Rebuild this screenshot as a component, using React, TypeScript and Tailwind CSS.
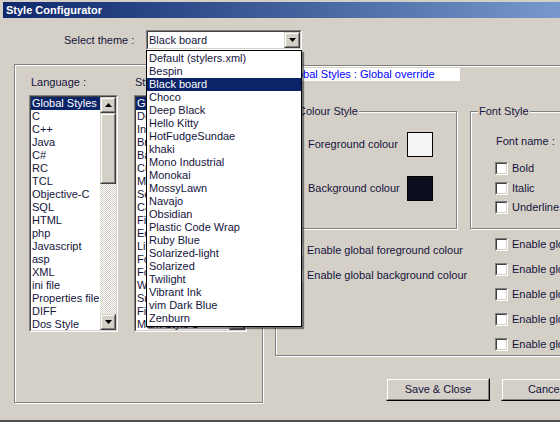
import { ReactNode } from "react";

const themes = [
  "Default (stylers.xml)",
  "Bespin",
  "Black board",
  "Choco",
  "Deep Black",
  "Hello Kitty",
  "HotFudgeSundae",
  "khaki",
  "Mono Industrial",
  "Monokai",
  "MossyLawn",
  "Navajo",
  "Obsidian",
  "Plastic Code Wrap",
  "Ruby Blue",
  "Solarized-light",
  "Solarized",
  "Twilight",
  "Vibrant Ink",
  "vim Dark Blue",
  "Zenburn",
];

const languages = [
  "Global Styles",
  "C",
  "C++",
  "Java",
  "C#",
  "RC",
  "TCL",
  "Objective-C",
  "SQL",
  "HTML",
  "php",
  "Javascript",
  "asp",
  "XML",
  "ini file",
  "Properties file",
  "DIFF",
  "Dos Style",
];

const styles = [
  "Global override",
  "Default Style",
  "Indent guideline style",
  "Brace highlight style",
  "Bad brace colour",
  "Current line background colour",
  "Mark colour",
  "Selected text colour",
  "Caret colour",
  "Find status",
  "Edge colour",
  "Line number margin",
  "Fold",
  "Fold margin",
  "White space symbol",
  "Smart HighLighting",
  "Find Mark Style",
  "Mark Style 1",
];

const globalToggles = [
  "Enable global font",
  "Enable global font size",
  "Enable global bold font style",
  "Enable global italic font style",
  "Enable global underline font style",
];

const Raised = ({ className = "", children }: { className?: string; children?: ReactNode }) => (
  <div
    className={`border border-t-[#d4d0c8] border-l-[#d4d0c8] border-r-[#404040] border-b-[#404040] ${className}`}
  >
    <div className="w-full h-full border border-t-white border-l-white border-r-[#808080] border-b-[#808080] bg-[#d4d0c8] flex items-center justify-center">
      {children}
    </div>
  </div>
);

const Arrow = ({ up }: { up?: boolean }) => (
  <svg width="7" height="4" viewBox="0 0 7 4">
    <path d={up ? "M3.5 0 L7 4 L0 4 Z" : "M0 0 L7 0 L3.5 4 Z"} fill="#000000" />
  </svg>
);

const Checkbox = () => (
  <div className="w-[13px] h-[13px] shrink-0 border border-t-[#808080] border-l-[#808080] border-r-white border-b-white">
    <div className="w-full h-full border border-t-[#404040] border-l-[#404040] border-r-[#d4d0c8] border-b-[#d4d0c8] bg-white" />
  </div>
);

const GroupBox = ({
  label,
  className = "",
  children,
}: {
  label?: string;
  className?: string;
  children?: ReactNode;
}) => (
  <div
    className={`relative border border-[#808080] shadow-[inset_1px_1px_0_#ffffff,1px_1px_0_#ffffff] ${className}`}
  >
    {label && (
      <span className="absolute -top-[7px] left-[7px] px-[1px] leading-[13px] bg-[#d4d0c8]">
        {label}
      </span>
    )}
    {children}
  </div>
);

const ListBox = ({
  items,
  width,
  thumb,
}: {
  items: string[];
  width: string;
  thumb: boolean;
}) => (
  <div
    className={`${width} h-[237px] border border-t-[#808080] border-l-[#808080] border-r-white border-b-white`}
  >
    <div className="h-full flex border border-t-[#404040] border-l-[#404040] border-r-[#d4d0c8] border-b-[#d4d0c8] bg-white overflow-hidden">
      <div className="flex-1 min-w-0 overflow-hidden">
        {items.map((item, i) => (
          <div
            key={item}
            className={`h-[13px] leading-[13px] pl-[1px] whitespace-nowrap ${
              i === 0 ? "bg-[#0a246a] text-white" : ""
            }`}
          >
            {item}
          </div>
        ))}
      </div>
      <div className="w-[16px] shrink-0 flex flex-col">
        <Raised className="w-[16px] h-[16px]">
          <Arrow up />
        </Raised>
        {thumb && <Raised className="w-[16px] h-[71px]" />}
        <div className="flex-1 bg-[repeating-conic-gradient(#ffffff_0%_25%,#d4d0c8_0%_50%)] bg-[length:2px_2px]" />
        <Raised className="w-[16px] h-[16px]">
          <Arrow />
        </Raised>
      </div>
    </div>
  </div>
);

export default function App() {
  return (
    <div className="w-[560px] h-[422px] overflow-hidden flex flex-col bg-[#d4d0c8] text-[#14143c] text-[11px] font-['Liberation_Sans',Arial,sans-serif] border-b-2 border-b-[#505050] select-none">
      <div className="mt-[2px] ml-[3px] w-[600px] h-[16px] shrink-0 flex items-center pl-[3px] bg-linear-to-r from-[#10286c] to-[#80a2d2]">
        <span className="text-white font-bold leading-[16px]">Style Configurator</span>
      </div>

      <div className="mt-[12px] pl-[64px] flex items-center shrink-0">
        <span className="w-[82px] leading-[13px]">Select theme :</span>
        <div className="relative">
          <div className="w-[156px] h-[20px] border border-t-[#808080] border-l-[#808080] border-r-white border-b-white">
            <div className="h-full flex items-center border border-t-[#404040] border-l-[#404040] border-r-[#d4d0c8] border-b-[#d4d0c8] bg-white">
              <span className="flex-1 pl-[1px] leading-[13px]">Black board</span>
              <Raised className="w-[16px] h-[16px]">
                <Arrow />
              </Raised>
            </div>
          </div>
          <div className="absolute left-0 top-full z-10 w-[156px] border border-black bg-white py-[1px] shadow-[2px_2px_1px_rgba(0,0,0,0.45)]">
            {themes.map((t) => (
              <div
                key={t}
                className={`h-[13px] leading-[13px] pl-[2px] whitespace-nowrap ${
                  t === "Black board" ? "bg-[#0a246a] text-white" : ""
                }`}
              >
                {t}
              </div>
            ))}
          </div>
        </div>
      </div>

      <div className="mt-[14px] flex items-start shrink-0">
        <GroupBox className="ml-[14px] w-[249px] h-[339px] shrink-0">
          <div className="pt-[11px] pl-[14px] flex">
            <div className="flex flex-col">
              <span className="pl-[2px] h-[13px] leading-[13px]">Language :</span>
              <div className="mt-[6px]">
                <ListBox items={languages} width="w-[89px]" thumb />
              </div>
            </div>
            <div className="ml-[16px] flex flex-col">
              <span className="pl-[1px] h-[13px] leading-[13px]">Styles :</span>
              <div className="mt-[6px]">
                <ListBox items={styles} width="w-[113px]" thumb={false} />
              </div>
            </div>
          </div>
        </GroupBox>

        <div className="ml-[12px] mt-[1px] flex flex-col shrink-0">
          <GroupBox className="w-[320px] h-[291px]">
            <div className="mt-[2px] ml-[7px] w-[177px] h-[13px] bg-white text-[#0000ff] leading-[13px] pl-[3px] whitespace-nowrap overflow-hidden">
              Global Styles : Global override
            </div>

            <div className="mt-[30px] flex">
              <GroupBox label="Colour Style" className="ml-[13px] w-[168px] h-[118px] shrink-0">
                <div className="pt-[20px] pl-[18px] flex flex-col">
                  <div className="flex items-center h-[25px]">
                    <span className="w-[99px]">Foreground colour</span>
                    <div className="w-[26px] h-[25px] border border-black bg-[#f5f5f5]" />
                  </div>
                  <div className="mt-[19px] flex items-center h-[25px]">
                    <span className="w-[99px]">Background colour</span>
                    <div className="w-[26px] h-[25px] border border-black bg-[#0c0f1e]" />
                  </div>
                </div>
              </GroupBox>

              <GroupBox label="Font Style" className="ml-[13px] w-[200px] h-[118px] shrink-0">
                <div className="pt-[23px] pl-[24px] flex flex-col">
                  <span className="pl-[1px] h-[13px] leading-[13px]">Font name :</span>
                  <div className="mt-[14px] flex items-center gap-[4px] h-[13px]">
                    <Checkbox />
                    <span className="leading-[13px]">Bold</span>
                  </div>
                  <div className="mt-[7px] flex items-center gap-[4px] h-[13px]">
                    <Checkbox />
                    <span className="leading-[13px]">Italic</span>
                  </div>
                  <div className="mt-[6px] flex items-center gap-[4px] h-[13px]">
                    <Checkbox />
                    <span className="leading-[13px]">Underline</span>
                  </div>
                </div>
              </GroupBox>
            </div>

            <div className="flex">
              <div className="ml-[14px] w-[205px] shrink-0 pt-[15px] flex flex-col gap-[12px]">
                <div className="flex items-center gap-[4px] h-[13px]">
                  <Checkbox />
                  <span className="leading-[13px]">Enable global foreground colour</span>
                </div>
                <div className="flex items-center gap-[4px] h-[13px]">
                  <Checkbox />
                  <span className="leading-[13px]">Enable global background colour</span>
                </div>
              </div>
              <div className="pt-[9px] flex flex-col gap-[12px]">
                {globalToggles.map((label) => (
                  <div key={label} className="flex items-center gap-[4px] h-[13px] whitespace-nowrap">
                    <Checkbox />
                    <span className="leading-[13px]">{label}</span>
                  </div>
                ))}
              </div>
            </div>
          </GroupBox>

          <div className="mt-[22px] flex">
            <Raised className="ml-[111px] w-[104px] h-[23px] border-r-black border-b-black">
              <span className="leading-[13px]">Save &amp; Close</span>
            </Raised>
            <Raised className="ml-[11px] w-[88px] h-[23px] border-r-black border-b-black">
              <span className="leading-[13px]">Cancel</span>
            </Raised>
          </div>
        </div>
      </div>
    </div>
  );
}
